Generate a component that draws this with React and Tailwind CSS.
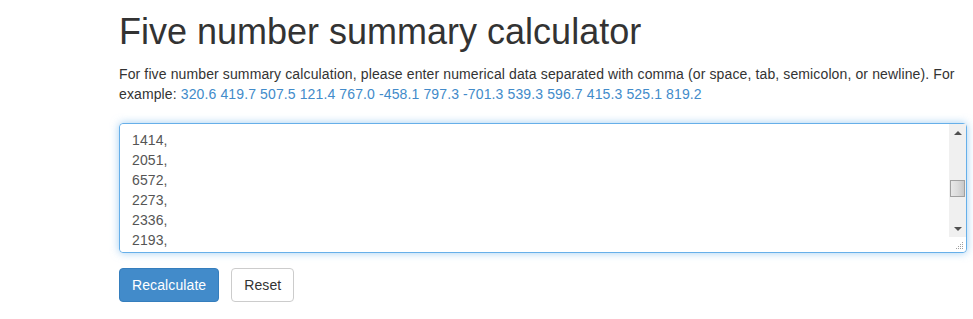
const values = ['1414', '2051', '6572', '2273', '2336', '2193', '1800', '2417'];

const sample = '320.6 419.7 507.5 121.4 767.0 -458.1 797.3 -701.3 539.3 596.7 415.3 525.1 819.2';

const App = () => {
  return (
    <div className="min-h-screen bg-white pl-[119px] pr-[6px] font-['Liberation_Sans',Arial,sans-serif] text-[#333]">
      <h1 className="pt-[12px] text-[36px] leading-[40px] font-normal">Five number summary calculator</h1>
      <p className="mt-[12px] text-[14px] leading-[20px] tracking-[0.12px]">
        For five number summary calculation, please enter numerical data separated with comma (or space, tab, semicolon, or newline). For
        example: <a className="text-[#428bca]">{sample}</a>
      </p>

      <div className="relative mt-[19px] h-[130px] w-[848px] rounded-[4px] border border-[#66afe9] shadow-[inset_0_1px_1px_rgba(0,0,0,0.075),0_0_8px_rgba(102,175,233,0.6)]">
        <textarea
          readOnly
          value={values.map((v) => v + ',').join('\n')}
          className="block h-full w-full resize-none overflow-hidden rounded-[4px] bg-white py-[6px] pl-[12px] pr-[30px] text-[14px] leading-[20px] tracking-[0.1px] text-[#555] outline-none"
        />
        {/* fake scrollbar, sits over the textarea */}
        <div className="absolute right-0 top-0 flex h-[113px] w-[17px] flex-col bg-[#f0f0f0]">
          <div className="flex h-[17px] items-center justify-center">
            <div className="h-0 w-0 border-x-[4px] border-b-[4px] border-x-transparent border-b-[#505050]" />
          </div>
          <div className="flex-1 pt-[39px]">
            <div className="mx-auto h-[17px] w-[15px] border border-[#a0a0a0] bg-gradient-to-r from-[#e8e8e8] via-[#dcdcdc] to-[#c8c8c8]" />
          </div>
          <div className="flex h-[17px] items-center justify-center">
            <div className="h-0 w-0 border-x-[4px] border-t-[4px] border-x-transparent border-t-[#505050]" />
          </div>
        </div>
        <svg className="absolute bottom-[2px] right-[2px]" width="8" height="8" viewBox="0 0 8 8">
          <g fill="#a0a0a0">
            <rect x="6" y="0" width="1" height="1" />
            <rect x="4" y="2" width="1" height="1" />
            <rect x="6" y="2" width="1" height="1" />
            <rect x="2" y="4" width="1" height="1" />
            <rect x="4" y="4" width="1" height="1" />
            <rect x="6" y="4" width="1" height="1" />
            <rect x="0" y="6" width="1" height="1" />
            <rect x="2" y="6" width="1" height="1" />
            <rect x="4" y="6" width="1" height="1" />
            <rect x="6" y="6" width="1" height="1" />
          </g>
        </svg>
      </div>

      <div className="mt-[15px] flex gap-[12px]">
        <button className="h-[34px] rounded-[4px] border border-[#357ebd] bg-[#428bca] px-[12px] text-[14px] tracking-[0.1px] text-white">Recalculate</button>
        <button className="h-[34px] rounded-[4px] border border-[#ccc] bg-white px-[12px] text-[14px] tracking-[0.1px] text-[#333]">Reset</button>
      </div>
    </div>
  );
};

export default App;
